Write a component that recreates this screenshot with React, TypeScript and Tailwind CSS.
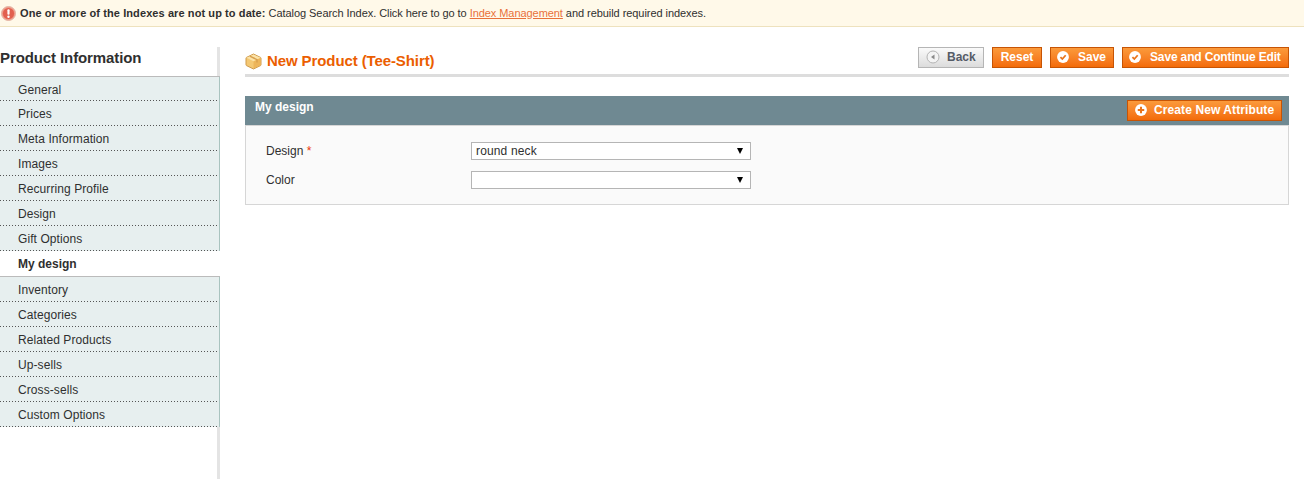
import { ReactNode } from "react";

const tabsTop = ["Prices", "Meta Information", "Images", "Recurring Profile", "Design", "Gift Options"];
const tabsBottom = ["Inventory", "Categories", "Related Products", "Up-sells", "Cross-sells", "Custom Options"];

function AlertIcon() {
  return (
    <svg width="15" height="15" viewBox="0 0 15 15" className="shrink-0">
      <circle cx="7.5" cy="7.5" r="7" fill="#f09a88" stroke="#e3b5a5" />
      <circle cx="7.5" cy="7.5" r="5.6" fill="#e2604e" />
      <rect x="6.4" y="3.2" width="2.2" height="5.6" rx="1" fill="#fff" />
      <circle cx="7.5" cy="10.8" r="1.2" fill="#fff" />
    </svg>
  );
}

function BoxIcon() {
  return (
    <svg width="17" height="17" viewBox="0 0 17 17" className="shrink-0">
      <path d="M8.5 1 L15.5 4.4 Q16 4.7 16 5.2 V11.8 Q16 12.3 15.5 12.6 L8.5 16 L1.5 12.6 Q1 12.3 1 11.8 V5.2 Q1 4.7 1.5 4.4 Z" fill="#f4c873" stroke="#cf9a4a" />
      <path d="M1.5 4.8 L8.5 8.2 L15.5 4.8 L8.5 1.4 Z" fill="#fbe3a8" />
      <path d="M8.5 8.4 V15.6 L15.5 12.2 V5 Z" fill="#edb55a" />
      <path d="M4.8 3.2 L12 6.6 V9.6" fill="none" stroke="#d79f4e" strokeWidth="1.4" />
    </svg>
  );
}

function BackIcon() {
  return (
    <svg width="14" height="14" viewBox="0 0 14 14" className="shrink-0">
      <circle cx="7" cy="7" r="6" fill="#f4f4f4" stroke="#b4b4b4" />
      <path d="M8.5 4.5 V9.5 L5 7 Z" fill="#8a8a8a" />
    </svg>
  );
}

function CheckIcon() {
  return (
    <svg width="12" height="12" viewBox="0 0 13 13" className="shrink-0">
      <circle cx="6.5" cy="6.5" r="6.4" fill="#fff" />
      <path d="M3.7 6.6 L5.8 8.7 L9.4 4.6" fill="none" stroke="#e9741a" strokeWidth="1.9" />
    </svg>
  );
}

function PlusIcon() {
  return (
    <svg width="12" height="12" viewBox="0 0 13 13" className="shrink-0">
      <circle cx="6.5" cy="6.5" r="6.4" fill="#fff" />
      <path d="M6.5 3 V10 M3 6.5 H10" fill="none" stroke="#e9741a" strokeWidth="2.2" />
    </svg>
  );
}

function OrangeButton({ children, className }: { children: ReactNode; className: string }) {
  return (
    <button className={`h-[21px] flex items-center pb-[1px] border border-[#c75404] bg-gradient-to-b from-[#fb9a3a] to-[#f36b07] text-white font-bold text-[12px] ${className}`}>
      {children}
    </button>
  );
}

function TabRow({ label, first }: { label: string; first?: boolean }) {
  return (
    <li className={`${first ? "h-[24px]" : "h-[25px]"} pt-[6px] pl-[18px] leading-[15px] tracking-[0.08px] bg-[#e7efef] bg-[linear-gradient(to_right,#555555_1px,transparent_1px)] bg-[length:3px_1px] bg-bottom bg-repeat-x border-r border-r-[#a9c3bf] text-[12px] text-[#2f2f2f]`}>
      {label}
    </li>
  );
}

function SelectBox({ value }: { value: string }) {
  return (
    <div className="w-[280px] h-[18px] flex items-center justify-between bg-white border border-[#b5b5b5] pl-[4px] pr-[7px] text-[12px] tracking-[0.15px] text-[#2f2f2f]">
      <span>{value}</span>
      <span className="w-0 h-0 border-x-[3.5px] border-x-transparent border-t-[6px] border-t-black" />
    </div>
  );
}

export default function App() {
  return (
    <div className="w-[1304px] h-[479px] overflow-hidden bg-white text-[12px] text-[#2f2f2f] font-['Liberation_Sans',Arial,sans-serif]">
      {/* Index notice */}
      <div className="h-[27px] flex items-center gap-[4px] pl-[1px] bg-[#fff9e9] border-b border-[#eee2be] text-[11px] text-[#2f2f2f]">
        <AlertIcon />
        <p className="tracking-[-0.06px]">
          <strong className="font-bold tracking-[0.09px]">One or more of the Indexes are not up to date:</strong> Catalog Search Index. Click here to go to{" "}
          <a className="text-[#e9703a] underline">Index Management</a> and rebuild required indexes.
        </p>
      </div>

      <div className="flex pt-[20px]">
        {/* Sidebar */}
        <aside className="w-[220px] h-[432px] shrink-0 border-r-[3px] border-[#e4e4e4]">
          <h3 className="h-[29px] pt-[2px] leading-[18px] text-[15px] tracking-[-0.1px] font-bold text-[#2f2f2f]">Product Information</h3>
          <ul className="-mr-[3px] w-[220px] border-t border-[#bbbbbb]">
            <TabRow label="General" first />
            {tabsTop.map((t) => (
              <TabRow key={t} label={t} />
            ))}
            <li className="h-[26px] pl-[18px] pt-[6px] leading-[15px] bg-white border-b border-[#bbbbbb] text-[12px] font-bold text-[#2f2f2f]">My design</li>
            {tabsBottom.map((t) => (
              <TabRow key={t} label={t} />
            ))}
          </ul>
        </aside>

        {/* Main column */}
        <main className="w-[1044px] ml-[25px]">
          <div className="h-[30px] flex items-start justify-between border-b-[3px] border-[#dddddd]">
            <div className="flex items-center gap-[5px] pt-[5px]">
              <BoxIcon />
              <h3 className="text-[15px] leading-[18px] tracking-[-0.1px] font-bold text-[#eb5e00]">New Product (Tee-Shirt)</h3>
            </div>
            <div className="flex gap-[8px]">
              <button className="w-[66px] h-[21px] flex items-center gap-[7px] pl-[7px] pb-[1px] border border-[#b5b5b5] bg-gradient-to-b from-[#fafafa] to-[#dcdcdc] font-bold text-[12px] text-[#555b66]">
                <BackIcon />
                Back
              </button>
              <OrangeButton className="w-[50px] justify-center">Reset</OrangeButton>
              <OrangeButton className="w-[64px] pl-[6px] gap-[9px]">
                <CheckIcon />
                Save
              </OrangeButton>
              <OrangeButton className="w-[167px] pl-[6px] gap-[9px] tracking-[-0.15px]">
                <CheckIcon />
                Save and Continue Edit
              </OrangeButton>
            </div>
          </div>

          <section className="mt-[19px]">
            <div className="h-[29px] flex justify-between bg-[#6f8992] pl-[10px] pr-[7px]">
              <h4 className="pt-[4px] leading-[15px] text-[12px] font-bold text-white">My design</h4>
              <OrangeButton className="w-[155px] mt-[4px] pl-[7px] gap-[7px] tracking-[0.1px]">
                <PlusIcon />
                Create New Attribute
              </OrangeButton>
            </div>
            <div className="h-[80px] flex flex-col gap-[11px] pt-[16px] pl-[20px] bg-[#fafafa] border border-[#d6d6d6]">
              <div className="flex items-center">
                <label className="w-[205px] text-[12px] text-[#2f2f2f]">
                  Design <span className="text-[#eb340a]">*</span>
                </label>
                <SelectBox value="round neck" />
              </div>
              <div className="flex items-center">
                <label className="w-[205px] text-[12px] text-[#2f2f2f]">Color</label>
                <SelectBox value="" />
              </div>
            </div>
          </section>
        </main>
      </div>
    </div>
  );
}
